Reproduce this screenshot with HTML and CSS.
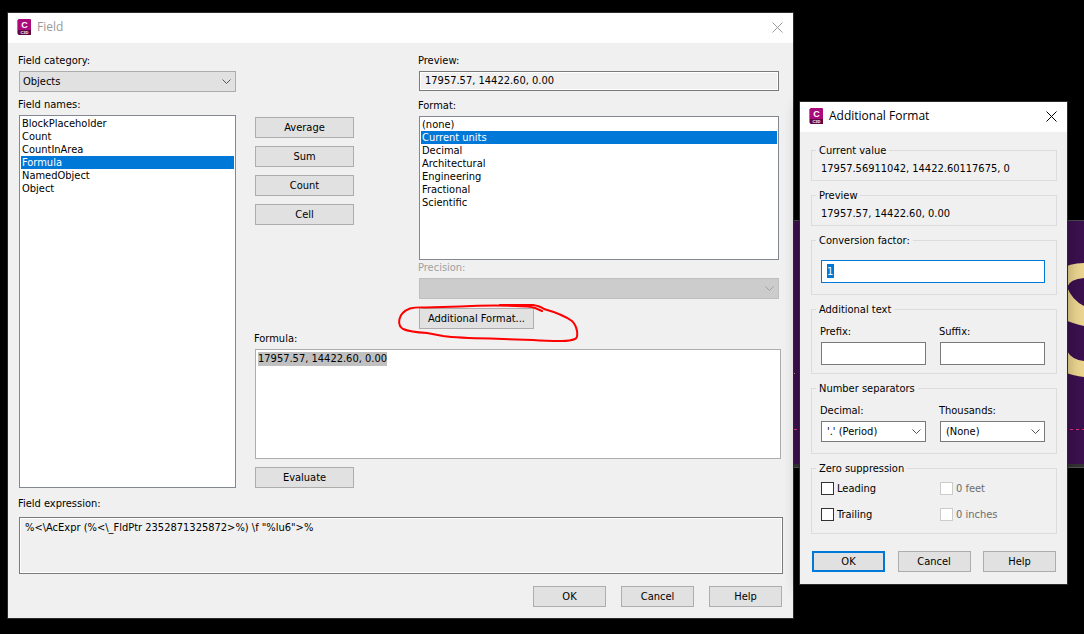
FILE: index.html
```html
<!DOCTYPE html>
<html lang="en">
<head>
    <meta charset="UTF-8">
    <meta name="viewport" content="width=device-width, initial-scale=1.0">
    <title>Field</title>
    <link rel="stylesheet" href="styles.css">
</head>
<body>
    <!-- drawing area behind the dialogs -->
    <svg class="canvas" width="291" height="248" viewBox="793 220 291 248" aria-hidden="true">
        <rect x="793" y="220" width="291" height="248" fill="#3c104f"/>
        <rect x="793" y="220" width="291" height="1" fill="#4a4a4a"/>
        <rect x="793" y="464" width="291" height="3" fill="#333"/>
        <rect x="793" y="467" width="291" height="1" fill="#555"/>
        <path d="M1060 270Q1069 263 1084 263V278Q1070 279 1067 287Q1072 300 1084 306V326Q1074 324 1060 318Z" fill="#ecd591"/>
        <path d="M1060 345L1067 351Q1072 360 1084 361V377Q1074 376 1060 371Z" fill="#ecd591"/>
        <path d="M793 371l2 3h-2z" fill="#ecd591"/>
        <path d="M794 429.500H798M1070 429.500H1084" stroke="#e6307c" stroke-dasharray="3 3"/>
    </svg>

    <main class="desktop">
        <section class="window field-window">
            <header class="titlebar inactive">
                <svg class="app-icon" width="16" height="17" viewBox="0 0 16 17" aria-hidden="true">
                    <path d="M0 1h3v14H1q-1 0-1-1z" fill="#d957a8"/>
                    <path d="M2 0h11q1 0 1 1v11H1V1q0-1 1-1z" fill="#ab0a7d"/>
                    <path d="M1 11h13v5H2q-1 0-1-1z" fill="#640546"/>
                    <text x="7.500" y="9" class="icon-letter">C</text>
                    <text x="7.500" y="15" class="icon-tag">C3D</text>
                </svg>
                <h1>Field</h1>
                <button class="close" aria-label="Close">
                    <svg width="11" height="11" viewBox="0 0 11 11"><path d="M.5.5l10 10M10.500.5l-10 10"/></svg>
                </button>
            </header>

            <div class="field-body">
                <div class="names">
                    <label for="category">Field category:</label>
                    <select id="category" class="combo gray">
                        <option>Objects</option>
                    </select>
                    <label class="spaced" for="names">Field names:</label>
                    <select id="names" class="listbox" size="6">
                        <option>BlockPlaceholder</option>
                        <option>Count</option>
                        <option>CountInArea</option>
                        <option selected>Formula</option>
                        <option>NamedObject</option>
                        <option>Object</option>
                    </select>
                </div>

                <div class="editor">
                    <div class="options">
                        <div class="functions">
                            <button>Average</button>
                            <button>Sum</button>
                            <button>Count</button>
                            <button>Cell</button>
                        </div>
                        <div class="format">
                            <label for="preview">Preview:</label>
                            <input id="preview" class="readout" type="text" value="17957.57, 14422.60, 0.00" readonly>
                            <label class="format-label" for="format">Format:</label>
                            <select id="format" class="listbox" size="7">
                                <option>(none)</option>
                                <option selected>Current units</option>
                                <option>Decimal</option>
                                <option>Architectural</option>
                                <option>Engineering</option>
                                <option>Fractional</option>
                                <option>Scientific</option>
                            </select>
                            <label class="disabled" for="precision">Precision:</label>
                            <select id="precision" class="combo" disabled></select>
                            <div class="additional">
                                <button>Additional Format...</button>
                                <svg class="scribble" width="184" height="44" viewBox="396 300 184 44" aria-hidden="true">
                                    <path d="M500 305L533 305Q540 306 544 309Q562 314 572 321Q576 325 577 331Q578 338 575 339Q570 341 562 341Q545 341 533 340L490 338.500Q458 338 443 336L427 333Q410 332 403 329Q398 326 399.500 319Q401 312 410 308.500Q416 307 425 307.500L460 306.500Q490 305 515 306Q530 306 535 308L542 311"/>
                                </svg>
                            </div>
                        </div>
                    </div>
                    <label class="formula-label" for="formula">Formula:</label>
                    <textarea id="formula" class="formula" spellcheck="false">17957.57, 14422.60, 0.00</textarea>
                    <button class="evaluate">Evaluate</button>
                </div>

                <div class="expression">
                    <label for="expression">Field expression:</label>
                    <textarea id="expression" class="readout" readonly>%&lt;\AcExpr (%&lt;\_FldPtr 2352871325872&gt;%) \f "%lu6"&gt;%</textarea>
                </div>

                <footer class="field-actions">
                    <button>OK</button>
                    <button>Cancel</button>
                    <button>Help</button>
                </footer>
            </div>
        </section>

        <section class="window format-window">
            <header class="titlebar">
                <svg class="app-icon" width="16" height="17" viewBox="0 0 16 17" aria-hidden="true">
                    <path d="M0 1h3v14H1q-1 0-1-1z" fill="#d957a8"/>
                    <path d="M2 0h11q1 0 1 1v11H1V1q0-1 1-1z" fill="#ab0a7d"/>
                    <path d="M1 11h13v5H2q-1 0-1-1z" fill="#640546"/>
                    <text x="7.500" y="9" class="icon-letter">C</text>
                    <text x="7.500" y="15" class="icon-tag">C3D</text>
                </svg>
                <h1>Additional Format</h1>
                <button class="close" aria-label="Close">
                    <svg width="11" height="11" viewBox="0 0 11 11"><path d="M.5.5l10 10M10.500.5l-10 10"/></svg>
                </button>
            </header>

            <div class="format-body">
                <fieldset class="value">
                    <legend>Current value</legend>
                    <p>17957.56911042, 14422.60117675, 0</p>
                </fieldset>
                <fieldset class="value">
                    <legend>Preview</legend>
                    <p>17957.57, 14422.60, 0.00</p>
                </fieldset>
                <fieldset class="factor">
                    <legend><label for="factor">Conversion factor:</label></legend>
                    <input id="factor" type="text" value="1">
                </fieldset>
                <fieldset class="pair texts">
                    <legend>Additional text</legend>
                    <div class="cell">
                        <label for="prefix">Prefix:</label>
                        <input id="prefix" type="text">
                    </div>
                    <div class="cell">
                        <label for="suffix">Suffix:</label>
                        <input id="suffix" type="text">
                    </div>
                </fieldset>
                <fieldset class="pair separators">
                    <legend>Number separators</legend>
                    <div class="cell">
                        <label for="decimal">Decimal:</label>
                        <select id="decimal" class="combo"><option>'.' (Period)</option></select>
                    </div>
                    <div class="cell">
                        <label for="thousands">Thousands:</label>
                        <select id="thousands" class="combo"><option>(None)</option></select>
                    </div>
                </fieldset>
                <fieldset class="pair zeros">
                    <legend>Zero suppression</legend>
                    <label class="check"><input type="checkbox">Leading</label>
                    <label class="check"><input type="checkbox" disabled>0 feet</label>
                    <label class="check"><input type="checkbox">Trailing</label>
                    <label class="check"><input type="checkbox" disabled>0 inches</label>
                </fieldset>
                <footer class="format-actions">
                    <button class="default">OK</button>
                    <button>Cancel</button>
                    <button>Help</button>
                </footer>
            </div>
        </section>
    </main>
</body>
</html>
```

FILE: styles.css
```css
* {
    box-sizing: border-box;
}

body {
    margin: 0;
    background-color: #000;
    color: #000;
    font-family: Tahoma, "DejaVu Sans Condensed", "Noto Sans", sans-serif;
    font-size: 11px;
    line-height: 13px;
}

button, input, select, textarea {
    margin: 0;
    font: inherit;
    color: inherit;
    border-radius: 0;
    outline: none;
}

.canvas {
    position: absolute;
    top: 220px;
    right: 0;
    z-index: -1;
}

.desktop {
    display: flex;
    align-items: flex-start;
    gap: 5px;
    padding: 12px 16px 16px 7px;
}

/* windows */
.window {
    background-color: #f0f0f0;
    border: 1px solid #2b2b2b;
}

.field-window {
    flex: 1;
    min-width: 640px;
}

.format-window {
    flex: none;
    margin-top: 89px;
    box-shadow: 0 4px 14px rgba(0, 0, 0, 0.3);
}

.titlebar {
    display: flex;
    align-items: center;
    gap: 4px;
    height: 30px;
    padding: 0 10px 2px 9px;
    background-color: #fff;
}

.titlebar h1 {
    flex: 1;
    margin: 0;
    font-family: "Segoe UI", "Open Sans", sans-serif;
    font-size: 12px;
    font-weight: normal;
    line-height: 16px;
}

.inactive h1 {
    color: #999;
}

.icon-letter, .icon-tag {
    fill: #fff;
    font-family: "Liberation Sans", sans-serif;
    font-weight: bold;
    text-anchor: middle;
}

.icon-letter {
    font-size: 9px;
}

.icon-tag {
    font-size: 4px;
}

.close {
    display: flex;
    padding: 0;
    border: none;
    background: none;
}

.close path {
    stroke: #000;
}

.inactive .close path {
    stroke: #999;
}

/* shared controls */
.field-body button, .format-body button {
    height: 21px;
    padding: 0;
    background-color: #e1e1e1;
    border: 1px solid #adadad;
}

.format-body .default {
    border: 2px solid #0078d7;
}

.combo {
    appearance: none;
    width: 100%;
    height: 21px;
    padding: 0 20px 0 5px;
    border: 1px solid #7a7a7a;
    background: #fff url("data:image/svg+xml,%3Csvg xmlns='http://www.w3.org/2000/svg' width='9' height='6'%3E%3Cpath d='M.5.5l4 4 4-4' fill='none' stroke='%23555'/%3E%3C/svg%3E") no-repeat right 4px center;
}

.combo.gray {
    background-color: #e1e1e1;
    border-color: #adadad;
    padding-left: 3px;
}

.combo:disabled {
    background-color: #ccc;
    background-image: url("data:image/svg+xml,%3Csvg xmlns='http://www.w3.org/2000/svg' width='9' height='6'%3E%3Cpath d='M.5.5l4 4 4-4' fill='none' stroke='%23a0a0a0'/%3E%3C/svg%3E");
    border-color: #bfbfbf;
    opacity: 1;
}

.listbox {
    display: block;
    width: 100%;
    padding: 1px;
    background-color: #fff;
    border: 1px solid #828790;
    overflow: hidden;
}

.listbox option {
    height: 13px;
    min-height: 13px;
    padding: 0 1px;
    line-height: 13px;
}

.listbox option:checked {
    background: linear-gradient(#0078d7, #0078d7);
    -webkit-text-fill-color: #fff;
}

.readout {
    display: block;
    width: 100%;
    padding: 0 5px 2px;
    background-color: #f0f0f0;
    border: 1px solid #7a7a7a;
    box-shadow: inset 0 0 0 1px #fff;
    resize: none;
}

/* Field */
.field-body {
    display: grid;
    grid-template-columns: 217px 1fr;
    column-gap: 19px;
    padding: 11px 10px 11px 11px;
}

.field-body label {
    display: block;
    height: 17px;
    margin-left: -1px;
}

.names {
    display: flex;
    flex-direction: column;
}

.names .spaced {
    margin-top: 6px;
}

.names .listbox {
    flex: 1;
}

.editor {
    padding-right: 2px;
}

.options {
    display: flex;
    gap: 65px;
    padding-right: 2px;
}

.functions {
    display: flex;
    flex-direction: column;
    gap: 8px;
    width: 99px;
    padding-top: 63px;
}

.format {
    flex: 1;
}

.format input {
    height: 20px;
}

.format .format-label {
    margin-top: 8px;
}

.format .listbox {
    height: 144px;
    margin-bottom: 1px;
}

.field-body .disabled {
    color: #a0a0a0;
}

.additional {
    position: relative;
    padding-top: 9px;
}

.additional button {
    width: 115px;
}

.scribble {
    position: absolute;
    top: 1px;
    left: -23px;
    pointer-events: none;
}

.scribble path {
    fill: none;
    stroke: #f00;
    stroke-width: 2;
    stroke-linecap: round;
    stroke-linejoin: round;
}

.formula-label {
    margin-top: 3px;
}

.formula {
    display: block;
    width: 100%;
    height: 110px;
    margin-bottom: 8px;
    padding: 2px;
    border: 1px solid #adadad;
    background: #fff linear-gradient(#c0c0c0, #c0c0c0) no-repeat 2px 2px / 129px 14px;
    resize: none;
}

.evaluate {
    width: 99px;
}

.expression {
    grid-column: 1 / -1;
    padding-top: 9px;
}

.expression label {
    height: 20px;
}

.expression .readout {
    height: 57px;
    padding-top: 3px;
}

.field-actions {
    display: flex;
    grid-column: 1 / -1;
    justify-content: flex-end;
    gap: 15px;
    padding: 12px 1px 0 0;
}

.field-actions button, .format-actions button {
    width: 73px;
}

/* Additional Format */
.format-body {
    display: flex;
    flex-direction: column;
    gap: 8px;
    padding: 12px 10px 12px 11px;
}

fieldset {
    min-width: 0;
    margin: 0;
    padding: 5px 11px 5px 9px;
    border: 1px solid #dcdcdc;
}

legend {
    margin-left: -5px;
    padding: 0 3px;
}

.value p {
    margin: 0;
}

.factor {
    padding-top: 13px;
    padding-bottom: 11px;
}

.format-body input[type="text"] {
    display: block;
    width: 100%;
    height: 23px;
    padding: 0 5px;
    border: 1px solid #7a7a7a;
}

.format-body .factor input {
    color: #fff;
    border-color: #0078d7;
    background: #fff linear-gradient(#0078d7, #0078d7) no-repeat 5px 3px / 7px 14px;
}

.pair {
    display: grid;
    grid-template-columns: 105px 105px;
    column-gap: 14px;
}

.cell label {
    display: block;
    height: 17px;
    margin-left: -1px;
}

.texts {
    padding-top: 9px;
    padding-bottom: 8px;
}

.separators {
    padding-top: 9px;
    padding-bottom: 11px;
}

.zeros {
    row-gap: 13px;
    padding-top: 7px;
    padding-bottom: 12px;
}

.check {
    display: flex;
    align-items: center;
    gap: 3px;
}

.check input {
    appearance: none;
    width: 13px;
    height: 13px;
    background-color: #fff;
    border: 1px solid #333;
}

.check input:disabled {
    border-color: #ccc;
}

.check:has(input:disabled) {
    color: #6d6d6d;
}

.format-actions {
    display: flex;
    justify-content: space-between;
    padding: 9px 1px 0;
}
```
